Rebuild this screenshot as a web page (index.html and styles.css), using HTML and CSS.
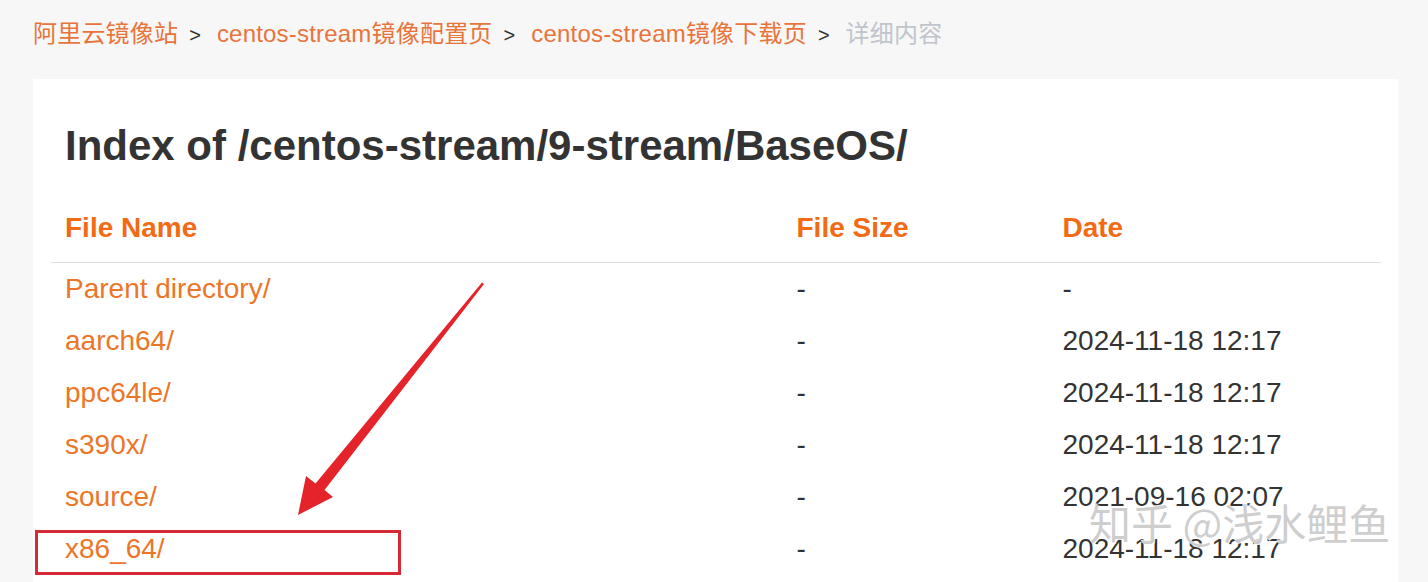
FILE: index.html
```html
<!DOCTYPE html>
<html lang="zh-CN">
<head>
<meta charset="utf-8">
<title>Index of /centos-stream/9-stream/BaseOS/</title>
<link rel="stylesheet" href="styles.css">
</head>
<body>
<nav class="crumbs">
  <a class="crumb" href="#">阿里云镜像站</a>
  <span class="sep">&gt;</span>
  <a class="crumb" href="#">centos-stream镜像配置页</a>
  <span class="sep">&gt;</span>
  <a class="crumb" href="#">centos-stream镜像下载页</a>
  <span class="sep">&gt;</span>
  <span class="crumb current">详细内容</span>
</nav>
<main class="card">
  <h1 class="title">Index of /centos-stream/9-stream/BaseOS/</h1>
  <table class="listing">
    <colgroup><col class="c-name"><col class="c-size"><col class="c-date"></colgroup>
    <thead>
      <tr><th>File Name</th><th>File Size</th><th>Date</th></tr>
    </thead>
    <tbody>
      <tr><td><a href="#">Parent directory/</a></td><td>-</td><td>-</td></tr>
      <tr><td><a href="#">aarch64/</a></td><td>-</td><td>2024-11-18 12:17</td></tr>
      <tr><td><a href="#">ppc64le/</a></td><td>-</td><td>2024-11-18 12:17</td></tr>
      <tr><td><a href="#">s390x/</a></td><td>-</td><td>2024-11-18 12:17</td></tr>
      <tr><td><a href="#">source/</a></td><td>-</td><td>2021-09-16 02:07</td></tr>
      <tr><td><a href="#">x86_64/</a></td><td>-</td><td>2024-11-18 12:17</td></tr>
    </tbody>
  </table>
</main>
<svg class="annot" width="1428" height="582" viewBox="0 0 1428 582" aria-hidden="true">
  <polygon fill="#e5232b" points="298,515 333,497 324.5,490 484,284 482,282.5 315.5,483.5 306,476"/>
  <rect x="36.5" y="531.5" width="363" height="42" fill="none" stroke="#d42a34" stroke-width="3"/>
</svg>
<div class="watermark">知乎 @浅水鲤鱼</div>
</body>
</html>
```
FILE: styles.css
```css
html, body {
  margin: 0;
  padding: 0;
}
body {
  background: #f7f7f7;
  font-family: "Liberation Sans", Arial, "Noto Sans CJK SC", sans-serif;
  color: #333;
  overflow: hidden;
  height: 582px;
}
.crumbs {
  display: flex;
  align-items: baseline;
  padding: 20px 33px 0;
  font-size: 24px;
  line-height: 28px;
  height: 28px;
  white-space: nowrap;
}
.crumb {
  color: #e8743b;
  text-decoration: none;
  letter-spacing: 0.2px;
}
.crumb.current {
  color: #c0c4cc;
}
.sep {
  color: #333;
  font-size: 20px;
  margin: 0 16px 0 11px;
}
.card {
  margin: 31px 30px 0 33px;
  background: #fff;
  padding: 45px 17px 0 18px;
  min-height: 600px;
}
.title {
  margin: 0;
  padding-left: 14px;
  font-size: 42px;
  line-height: 44px;
  font-weight: bold;
  color: #333;
}
.listing {
  width: 100%;
  border-collapse: collapse;
  margin-top: 40px;
  font-size: 28px;
}
.c-name { width: 55%; }
.c-size { width: 20%; }
.c-date { width: 25%; }
.listing th {
  text-align: left;
  color: #f36a14;
  font-weight: bold;
  font-size: 28px;
  line-height: 28px;
  padding: 6px 14px 20px;
  border-bottom: 1px solid #ddd;
}
.listing td {
  padding: 0 14px;
  height: 52px;
  line-height: 52px;
  color: #333;
}
.listing td a {
  color: #ec7628;
  text-decoration: none;
}
.annot {
  position: absolute;
  left: 0;
  top: 0;
  pointer-events: none;
}
.watermark {
  position: absolute;
  left: 1089px;
  top: 494px;
  font-family: "Noto Sans CJK SC", sans-serif;
  font-size: 42px;
  line-height: 56px;
  color: rgba(185, 185, 185, 0.7);
  text-shadow: 1px 1px 0 rgba(255,255,255,0.9), -1px -1px 0 rgba(255,255,255,0.9);
  white-space: nowrap;
  pointer-events: none;
}
```
